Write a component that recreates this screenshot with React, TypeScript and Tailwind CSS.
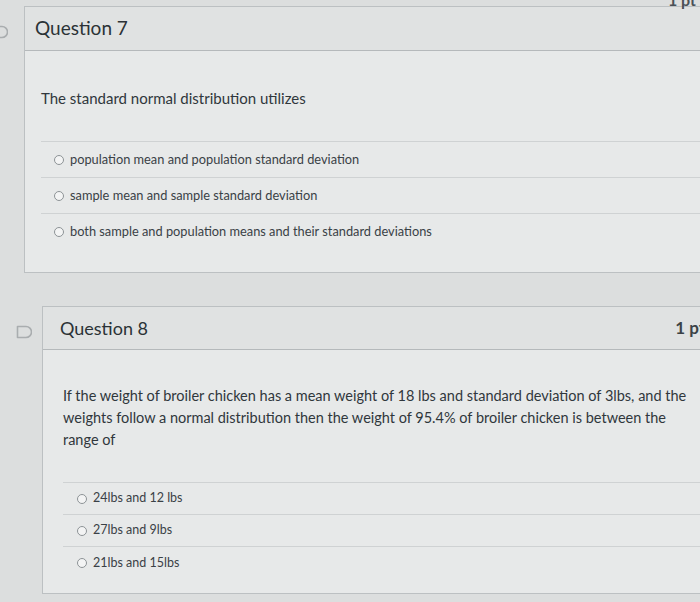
const OPTIONS_7 = [
  'population mean and population standard deviation',
  'sample mean and sample standard deviation',
  'both sample and population means and their standard deviations',
]

const OPTIONS_8 = ['24lbs and 12 lbs', '27lbs and 9lbs', '21lbs and 15lbs']

function FlagIcon() {
  return (
    <svg width="16" height="14" viewBox="0 0 16 14" fill="none">
      <path d="M1.5 1.5h8.5a4.5 4.5 0 0 1 0 11H1.5z" stroke="#a9adaf" strokeWidth="1.6" strokeLinejoin="round" />
    </svg>
  )
}

function Radio() {
  return <span className="inline-block h-[10px] w-[10px] shrink-0 rounded-full border-[1.5px] border-[#8d9396] bg-[#f3f4f4]" />
}

export default function App() {
  return (
    <div
      className="relative h-[602px] w-[700px] overflow-hidden bg-[#dcdede] text-[#2d3b45]"
      style={{ fontFamily: 'Lato, "Open Sans", sans-serif' }}
    >
      <div className="absolute right-[4px] top-[-12px] text-[16px] font-bold text-[#4a5157]">1 pt</div>

      {/* Question 7 */}
      <div className="flex pt-[6px]">
        <div className="flex w-[24px] shrink-0 items-start pt-[19px]">
          <div className="-ml-[8px]">
            <FlagIcon />
          </div>
        </div>
        <div className="flex-1 -mr-[20px] border border-[#bcc0c2]">
          <div className="flex h-[44px] items-center border-b border-[#b5b9bb] bg-[#e0e2e2] pl-[10px] text-[19px] text-[#2b3236]">
            Question 7
          </div>
          <div className="bg-[#e7e9e9] pb-[22px] pl-[16px] pt-[36px]">
            <p className="text-[15px] leading-[22px] text-[#30373c]">The standard normal distribution utilizes</p>
            <div className="mt-[32px] border-t border-[#cfd2d3]">
              {OPTIONS_7.map((o) => (
                <div key={o} className="flex h-[36px] items-center gap-[6px] border-b border-[#cfd2d3] pl-[13px] text-[12.8px] text-[#3a4146] last:border-b-0">
                  <Radio />
                  <span>{o}</span>
                </div>
              ))}
            </div>
          </div>
        </div>
      </div>

      {/* Question 8 */}
      <div className="mt-[33px] flex">
        <div className="flex w-[42px] shrink-0 items-start pl-[16px] pt-[19px]">
          <FlagIcon />
        </div>
        <div className="flex-1 -mr-[20px] border border-[#bcc0c2]">
          <div className="flex h-[43px] items-center justify-between border-b border-[#b5b9bb] bg-[#e0e2e2] pl-[17px] pr-[14px] text-[#2b3236]">
            <span className="text-[18px]">Question 8</span>
            <span className="text-[17px] font-bold text-[#3b4247]">1 pt</span>
          </div>
          <div className="bg-[#e7e9e9] pb-[14px] pl-[20px] pt-[35px]">
            <p className="pr-[26px] text-[14.5px] leading-[22px] text-[#30373c]">
              If the weight of broiler chicken has a mean weight of 18 lbs and standard deviation of 3lbs, and the weights follow a normal distribution then the weight of 95.4% of broiler chicken is between the range of
            </p>
            <div className="mt-[31px] border-t border-[#cfd2d3]">
              {OPTIONS_8.map((o) => (
                <div key={o} className="flex h-[32px] items-center gap-[6px] border-b border-[#cfd2d3] pl-[14px] text-[12.5px] text-[#3a4146] last:border-b-0">
                  <Radio />
                  <span>{o}</span>
                </div>
              ))}
            </div>
          </div>
        </div>
      </div>
    </div>
  )
}
